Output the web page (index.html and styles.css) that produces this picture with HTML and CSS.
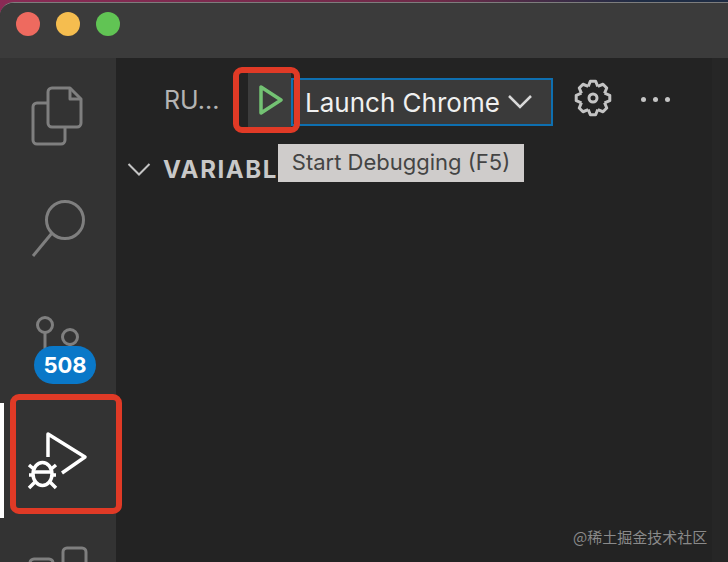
FILE: index.html
```html
<!DOCTYPE html>
<html>
  <head>
    <meta charset="utf-8">
    <title>Run and Debug</title>
    <link rel="stylesheet" href="styles.css">
  </head>
  <body>
    <div class="window">
      <div class="titlebar">
        <span class="light red"></span>
        <span class="light yellow"></span>
        <span class="light green"></span>
      </div>
      <div class="main">
        <div class="activity">
          <div class="item">
            <svg class="icon" width="116" height="114" viewBox="0 0 116 114">
              <path d="M47 45H37a4 4 0 0 0-4 4v33a4 4 0 0 0 4 4h24a4 4 0 0 0 4-4v-12"/>
              <path d="M52 30h18l11 11v24a4 4 0 0 1-4 4H52a4 4 0 0 1-4-4V34a4 4 0 0 1 4-4z"/>
              <path d="M70 30v11h11"/>
            </svg>
          </div>
          <div class="item">
            <svg class="icon" width="116" height="114" viewBox="0 0 116 114">
              <circle cx="65" cy="48" r="18.5"/>
              <path d="M52 61L33 84"/>
            </svg>
          </div>
          <div class="item item-git">
            <svg class="icon" width="116" height="114" viewBox="0 0 116 114">
              <circle cx="45" cy="39" r="7.5"/>
              <circle cx="70" cy="51" r="7.5"/>
              <path d="M45 47v20M70 59v8"/>
            </svg>
            <span class="badge">508</span>
          </div>
          <div class="item active">
            <svg class="icon" width="116" height="115" viewBox="0 0 116 115">
              <path d="M48 54V31L85 54L62 70"/>
              <ellipse cx="42.5" cy="71" rx="9.5" ry="11.5"/>
              <path d="M33 69H52M29 62L35 67M56 62L50 67M29 72H33M52 72H56M29 85L35 79M56 85L50 79"/>
            </svg>
          </div>
          <div class="item">
            <svg class="icon" width="116" height="114" viewBox="0 0 116 114">
              <rect x="63" y="30" width="23" height="24" rx="4"/>
              <rect x="30" y="41" width="23" height="24" rx="4"/>
            </svg>
          </div>
        </div>
        <div class="sidebar">
          <div class="toolbar">
            <span class="run-title">RU...</span>
            <div class="run-button">
              <svg width="26" height="30" viewBox="0 0 26 30">
                <path d="M4 2V28L24 15Z"/>
              </svg>
            </div>
            <div class="config">
              <span>Launch Chrome</span>
              <svg width="26" height="16" viewBox="0 0 26 16">
                <path d="M2 2L13 13L24 2"/>
              </svg>
            </div>
            <svg class="gear" width="40" height="40" viewBox="0 0 40 40">
              <defs>
                <path id="tooth" d="M15.22 8.45L17.34 3.21H22.66L24.78 8.45"/>
              </defs>
              <use href="#tooth"/>
              <use href="#tooth" transform="rotate(45 20 20)"/>
              <use href="#tooth" transform="rotate(90 20 20)"/>
              <use href="#tooth" transform="rotate(135 20 20)"/>
              <use href="#tooth" transform="rotate(180 20 20)"/>
              <use href="#tooth" transform="rotate(225 20 20)"/>
              <use href="#tooth" transform="rotate(270 20 20)"/>
              <use href="#tooth" transform="rotate(315 20 20)"/>
              <circle cx="20" cy="20" r="4"/>
            </svg>
            <div class="dots"><i></i><i></i><i></i></div>
          </div>
          <div class="section">
            <svg width="24" height="14" viewBox="0 0 24 14">
              <path d="M1.5 2L12 12.5L22.5 2"/>
            </svg>
            <span>VARIABLES</span>
          </div>
        </div>
        <div class="edge"></div>
      </div>
      <div class="tooltip">Start Debugging (F5)</div>
      <div class="mark mark-run"></div>
      <div class="mark mark-debug"></div>
      <div class="watermark">@稀土掘金技术社区</div>
    </div>
  </body>
</html>
```

FILE: styles.css
```css
html, body {
  margin: 0;
  height: 100%;
  background: linear-gradient(90deg, #8a2a55, #6e2a48 60%, #1e2c44 88%);
  overflow: hidden;
}
.window {
  position: relative;
  display: flex;
  flex-direction: column;
  box-sizing: border-box;
  width: 728px;
  height: 560px;
  margin-top: 2px;
  border-top: 1px solid #7d7d7d;
  border-top-left-radius: 14px;
  overflow: hidden;
  background-color: #232323;
  font-family: Inter, "Liberation Sans", sans-serif;
}
.titlebar {
  display: flex;
  align-items: center;
  gap: 16px;
  height: 55px;
  padding: 0 0 13px 16px;
  box-sizing: border-box;
  background-color: #3b3b3b;
}
.light {
  width: 24px;
  height: 24px;
  border-radius: 50%;
}
.red { background-color: #ee6a5f; }
.yellow { background-color: #f5bd4f; }
.green { background-color: #61c454; }
.main {
  display: flex;
  flex: 1;
  min-height: 0;
}
.activity {
  width: 116px;
  flex-shrink: 0;
  background-color: #333333;
}
.item {
  position: relative;
  height: 114px;
}
.item-git {
  height: 117px;
}
.icon {
  display: block;
  fill: none;
  stroke: #7f7f7f;
  stroke-width: 3;
  stroke-linejoin: round;
}
.active {
  height: 115px;
  border-left: 4px solid #ffffff;
}
.active .icon {
  margin-left: -4px;
  stroke: #ffffff;
  stroke-width: 3.5;
}
.badge {
  position: absolute;
  left: 34px;
  top: 60px;
  width: 62px;
  height: 38px;
  border-radius: 19px;
  background-color: #0a78c8;
  color: #ffffff;
  font-size: 22px;
  font-weight: 700;
  line-height: 38px;
  text-align: center;
}
.sidebar {
  flex: 1;
  min-width: 0;
}
.edge {
  width: 16px;
  flex-shrink: 0;
  background-color: #262626;
}
.toolbar {
  display: flex;
  align-items: center;
  height: 84px;
  padding-left: 48px;
}
.run-title {
  width: 84px;
  font-size: 25px;
  color: #b4b4b4;
}
.run-button {
  display: flex;
  align-items: center;
  justify-content: center;
  width: 43px;
  height: 54px;
  background-color: #3c3c3c;
}
.run-button path {
  fill: none;
  stroke: #73c273;
  stroke-width: 3.5;
  stroke-linejoin: round;
}
.config {
  display: flex;
  align-items: center;
  justify-content: space-between;
  width: 262px;
  height: 48px;
  margin-top: 4px;
  padding: 0 18px 0 12px;
  box-sizing: border-box;
  border: 2px solid #0e6fb0;
  background-color: #3a3a3a;
  color: #f0f0f0;
  font-size: 26px;
}
.config svg {
  fill: none;
  stroke: #d8d8d8;
  stroke-width: 2.5;
}
.gear {
  margin: 0 0 4px 20px;
  fill: none;
  stroke: #c4c4c4;
  stroke-width: 3;
  stroke-linejoin: round;
}
.dots {
  display: flex;
  gap: 7px;
  margin: 0 0 2px 28px;
}
.dots i {
  width: 5px;
  height: 5px;
  border-radius: 50%;
  background-color: #c4c4c4;
}
.section {
  display: flex;
  align-items: center;
  gap: 12px;
  height: 54px;
  padding-left: 11px;
  color: #c8c8c8;
  font-size: 24px;
  font-weight: 700;
  letter-spacing: 1.6px;
}
.section svg {
  fill: none;
  stroke: #c4c4c4;
  stroke-width: 2;
}
.tooltip {
  position: absolute;
  left: 278px;
  top: 141px;
  width: 246px;
  height: 38px;
  background-color: #cfcccb;
  color: #444444;
  font-size: 22px;
  line-height: 36px;
  text-align: center;
  white-space: nowrap;
}
.mark {
  position: absolute;
  box-sizing: border-box;
  border: 6px solid #e03a26;
  border-radius: 9px;
}
.mark-run {
  left: 233px;
  top: 64px;
  width: 67px;
  height: 66px;
}
.mark-debug {
  left: 10px;
  top: 391px;
  width: 112px;
  height: 120px;
}
.watermark {
  position: absolute;
  left: 573px;
  top: 523px;
  color: #8a8a8a;
  font-family: "Noto Sans CJK SC", sans-serif;
  font-size: 15px;
  white-space: nowrap;
}
```
